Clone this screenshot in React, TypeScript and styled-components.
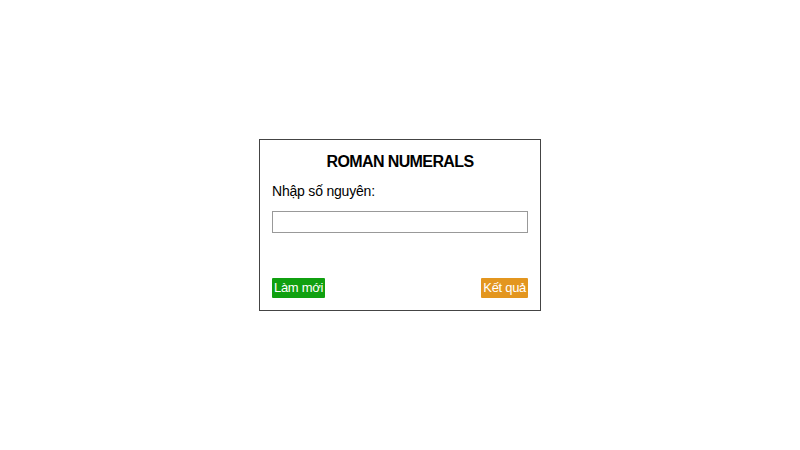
import React, { useState } from "react";
import styled, { createGlobalStyle } from "styled-components";

const Global = createGlobalStyle`
  html, body { margin: 0; padding: 0; background: #ffffff; }
  body { font-family: "Liberation Sans", Arial, sans-serif; }
`;

const Page = styled.div`
  width: 800px;
  height: 450px;
  display: flex;
  align-items: center;
  justify-content: center;
`;

const Card = styled.div`
  width: 256px;
  height: 146px;
  padding: 12px;
  border: 1px solid #444;
  display: flex;
  flex-direction: column;
`;

const Title = styled.h2`
  margin: 1px 0 0;
  font-size: 16px;
  letter-spacing: -0.6px;
  font-weight: bold;
  text-align: center;
  color: #000;
  line-height: 18px;
`;

const Label = styled.label`
  margin-top: 12px;
  font-size: 14px;
  letter-spacing: -0.2px;
  color: #000;
  line-height: 16px;
`;

const Input = styled.input`
  margin-top: 12px;
  box-sizing: border-box;
  width: 256px;
  height: 22px;
  border: 1px solid #999;
  padding: 2px 4px;
  font-family: inherit;
  font-size: 13px;
  outline: none;
`;

const Actions = styled.div`
  margin-top: auto;
  display: flex;
  justify-content: space-between;
  align-items: flex-end;
`;

const Button = styled.button<{ $tone: "green" | "orange" }>`
  border: none;
  border-radius: 1px;
  padding: 2px;
  height: 20px;
  font-family: "Liberation Sans", Arial, sans-serif;
  font-size: 13px;
  letter-spacing: -0.3px;
  line-height: 16px;
  color: #fff;
  background: ${(p) => (p.$tone === "green" ? "#10a010" : "#e3961f")};
  cursor: pointer;
`;

export default function App() {
  const [value, setValue] = useState("");
  return (
    <>
      <Global />
      <Page>
        <Card>
          <Title>ROMAN NUMERALS</Title>
          <Label htmlFor="num">Nhập số nguyên:</Label>
          <Input id="num" value={value} onChange={(e) => setValue(e.target.value)} />
          <Actions>
            <Button $tone="green" onClick={() => setValue("")}>Làm mới</Button>
            <Button $tone="orange">Kết quả</Button>
          </Actions>
        </Card>
      </Page>
    </>
  );
}
